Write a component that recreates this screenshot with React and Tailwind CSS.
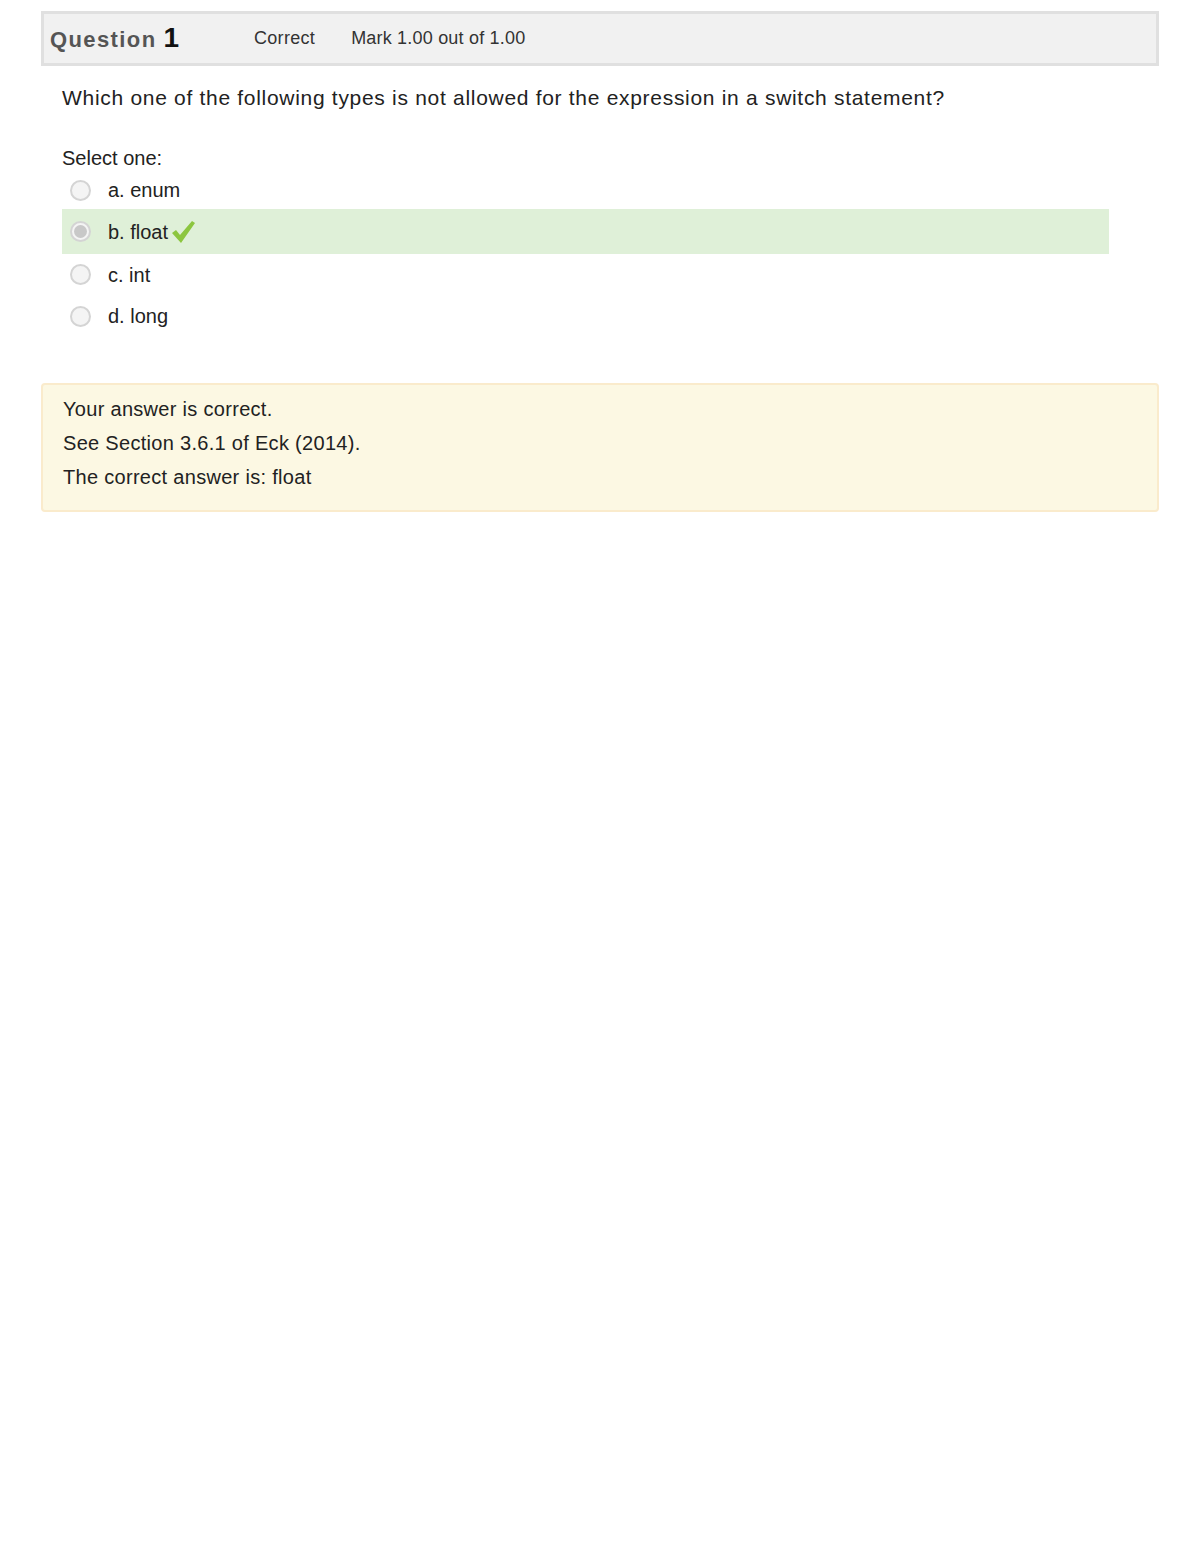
import React from "react";

function Radio({ checked }) {
  return (
    <span className="flex h-[21px] w-[21px] items-center justify-center rounded-full border-2 border-[#d4d4d4] bg-[#f4f4f4]">
      {checked && <span className="h-[13px] w-[13px] rounded-full bg-[#c8c8c8]" />}
    </span>
  );
}

function Check() {
  return (
    <svg width="26" height="26" viewBox="0 0 26 26" className="ml-[2px]">
      <path d="M2 14 L6 11 L10 16 L22 2 L25 4 L11 24 Z" fill="#8cc63f" />
    </svg>
  );
}

const options = [
  { label: "a. enum", h: "h-[38px]" },
  { label: "b. float", checked: true, correct: true, h: "h-[45px]" },
  { label: "c. int", h: "h-[41px]" },
  { label: "d. long", h: "h-[42px]" },
];

export default function App() {
  return (
    <div className="min-h-[1553px] w-[1200px] bg-white px-[41px] pt-[11px] font-['Liberation_Sans',Arial,sans-serif] text-[#222]">
      <div className="flex h-[55px] items-center border-[3px] border-[#e0e0e0] bg-[#f1f1f1] pb-[1px] pl-[6px]">
        <div className="flex w-[204px] items-baseline">
          <span className="text-[22px] font-bold tracking-[1.4px] text-[#555]">Question</span>
          <span className="ml-[7px] text-[28px] font-bold text-[#111]">1</span>
        </div>
        <span className="text-[18px] tracking-[0.3px] text-[#333]">Correct</span>
        <span className="ml-[36px] text-[18px] tracking-[0.2px] text-[#333]">Mark 1.00 out of 1.00</span>
      </div>

      <div className="pl-[21px] pt-[18px]">
        <p className="text-[21px] leading-[28px] tracking-[0.7px] text-[#222]">
          Which one of the following types is not allowed for the expression in a switch statement?
        </p>
        <p className="mt-[34px] text-[20px] leading-[24px] text-[#222]">Select one:</p>
        <div className="mt-[1px] w-[1047px]">
          {options.map((o) => (
            <div
              key={o.label}
              className={`flex items-center pl-[8px] ${o.h} ${o.correct ? "bg-[#dff0d8]" : ""}`}
            >
              <Radio checked={o.checked} />
              <span className="ml-[17px] text-[20px] text-[#222]">{o.label}</span>
              {o.correct && <Check />}
            </div>
          ))}
        </div>
      </div>

      <div className="mt-[46px] rounded-[4px] border-2 border-[#faebcc] bg-[#fcf8e3] px-[20px] pb-[16px] pt-[7px] text-[20px] leading-[34px] tracking-[0.3px] text-[#222]">
        <div>Your answer is correct.</div>
        <div>See Section 3.6.1 of Eck (2014).</div>
        <div>The correct answer is: float</div>
      </div>
    </div>
  );
}
